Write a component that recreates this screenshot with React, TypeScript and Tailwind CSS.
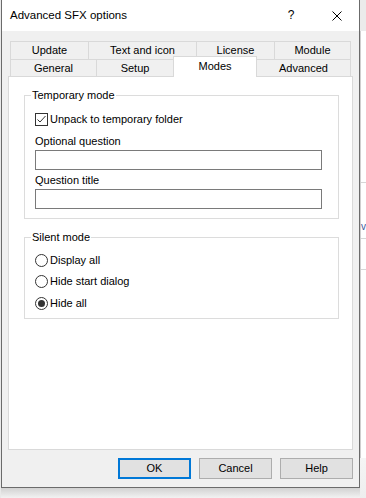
import React from "react";

function Tab({ label, w, last }: { label: string; w: string; last?: boolean }) {
  return (
    <div
      className={`${w} h-full flex items-center justify-center border-t border-l border-[#d9d9d9] bg-[#f0f0f0] ${
        last ? "border-r" : ""
      }`}
    >
      <span className="leading-[13px]">{label}</span>
    </div>
  );
}

function Checkbox() {
  return (
    <div className="w-[13px] h-[13px] border border-[#333333] bg-white flex items-center justify-center">
      <svg width="11" height="11" viewBox="0 0 11 11">
        <polyline points="1.5,5.5 4,8 9.5,2" fill="none" stroke="#333333" strokeWidth="1" />
      </svg>
    </div>
  );
}

function Radio({ checked }: { checked?: boolean }) {
  return (
    <div className="w-[13px] h-[13px] rounded-full border border-[#333333] bg-white flex items-center justify-center">
      {checked && <div className="w-[7px] h-[7px] rounded-full bg-[#333333]" />}
    </div>
  );
}

function Button({ label, primary }: { label: string; primary?: boolean }) {
  return (
    <div
      className={`w-[73px] h-[21px] bg-[#e1e1e1] flex items-center justify-center ${
        primary ? "border-2 border-[#0078d7]" : "border border-[#adadad]"
      }`}
    >
      <span className="leading-[13px]">{label}</span>
    </div>
  );
}

export default function App() {
  return (
    <div className="w-[366px] h-[498px] flex overflow-hidden bg-[#f0f0f0] text-black text-[11px] font-['Liberation_Sans',Arial,sans-serif]">
      <div className="w-px bg-[#e9e9e9]" />
      <div className="w-[360px] flex flex-col">
        <div className="h-[488px] border-x border-b border-[#6b6b6b] bg-[#f0f0f0] flex flex-col">
          {/* Title bar */}
          <div className="h-[31px] bg-white flex items-center">
            <span className="flex-1 pl-[8px] text-[11.5px] leading-[13px]">Advanced SFX options</span>
            <div className="w-[46px] h-full flex items-center justify-center">
              <span className="text-[12px] leading-[13px]">?</span>
            </div>
            <div className="w-[45px] h-full flex items-center justify-center">
              <svg width="10" height="10" viewBox="0 0 10 10">
                <path d="M0.5 0.5 L9.5 9.5 M9.5 0.5 L0.5 9.5" stroke="#000" strokeWidth="1" />
              </svg>
            </div>
          </div>

          {/* Body */}
          <div className="px-[6px] pt-[10px] flex flex-col">
            <div className="ml-[2px] flex flex-col">
              <div className="flex h-[18px]">
                <Tab label="Update" w="w-[78px]" />
                <Tab label="Text and icon" w="w-[108px]" />
                <Tab label="License" w="w-[78px]" />
                <Tab label="Module" w="w-[77px]" last />
              </div>
              <div className="flex items-end h-[17px]">
                <div className="w-[86px] h-full flex items-center justify-center border-t border-l border-[#d9d9d9] pt-px">
                  <span className="leading-[13px]">General</span>
                </div>
                <div className="w-[77px] h-full flex items-center justify-center border-t border-l border-[#d9d9d9] pt-px">
                  <span className="leading-[13px]">Setup</span>
                </div>
                <div className="relative z-10 w-[84px] h-[21px] -mb-px flex justify-center items-start pt-[3px] bg-white border-t border-x border-[#d9d9d9]">
                  <span className="leading-[13px]">Modes</span>
                </div>
                <div className="w-[94px] h-full flex items-center justify-center border-t border-r border-[#d9d9d9] pt-px">
                  <span className="leading-[13px]">Advanced</span>
                </div>
              </div>
            </div>

            {/* Panel */}
            <div className="w-[345px] h-[374px] border border-[#d9d9d9] bg-white flex flex-col">
              {/* Temporary mode */}
              <div className="relative mt-[18px] ml-[15px] w-[315px] border border-[#dcdcdc] pt-[17px] pb-[9px] pl-[10px] flex flex-col">
                <span className="absolute -top-[7px] left-[6px] bg-white px-px leading-[13px]">Temporary mode</span>
                <div className="h-[13px] flex items-center gap-[2px]">
                  <Checkbox />
                  <span className="leading-[13px]">Unpack to temporary folder</span>
                </div>
                <span className="mt-[9px] leading-[13px]">Optional question</span>
                <div className="mt-[2px] w-[287px] h-[20px] border border-[#7a7a7a] bg-white" />
                <span className="mt-[4px] leading-[13px]">Question title</span>
                <div className="mt-[2px] w-[287px] h-[20px] border border-[#7a7a7a] bg-white" />
              </div>

              {/* Silent mode */}
              <div className="relative mt-[18px] ml-[15px] w-[315px] border border-[#dcdcdc] pt-[16px] pb-[8px] pl-[10px] flex flex-col">
                <span className="absolute -top-[7px] left-[6px] bg-white px-px leading-[13px]">Silent mode</span>
                <div className="h-[13px] flex items-center gap-[2px]">
                  <Radio />
                  <span className="leading-[13px]">Display all</span>
                </div>
                <div className="mt-[8px] h-[13px] flex items-center gap-[2px]">
                  <Radio />
                  <span className="leading-[13px]">Hide start dialog</span>
                </div>
                <div className="mt-[9px] h-[13px] flex items-center gap-[2px]">
                  <Radio checked />
                  <span className="leading-[13px]">Hide all</span>
                </div>
              </div>
            </div>

            {/* Buttons */}
            <div className="mt-[8px] flex justify-end gap-[8px]">
              <Button label="OK" primary />
              <Button label="Cancel" />
              <Button label="Help" />
            </div>
          </div>
        </div>
        <div className="flex-1 bg-gradient-to-b from-[#d2d2d2] to-[#f2f2f2]" />
      </div>

      {/* Background window strip on the right */}
      <div className="flex-1 flex flex-col">
        <div className="h-[31px] bg-[#ebebeb]" />
        <div className="flex-1 bg-white border-l border-[#cfcfcf] flex flex-col">
          <div className="h-[151px]" />
          <div className="h-px bg-[#d6d6d6]" />
          <div className="h-[38px]" />
          <span className="text-[10px] leading-[12px] text-[#3a5a9a]">v</span>
          <div className="h-[5px]" />
          <div className="h-px bg-[#d6d6d6]" />
          <div className="h-[30px]" />
          <div className="h-px bg-[#d6d6d6]" />
        </div>
        <div className="h-[40px] bg-gradient-to-b from-[#f5f5f5] to-[#eeeeee]" />
      </div>
    </div>
  );
}
